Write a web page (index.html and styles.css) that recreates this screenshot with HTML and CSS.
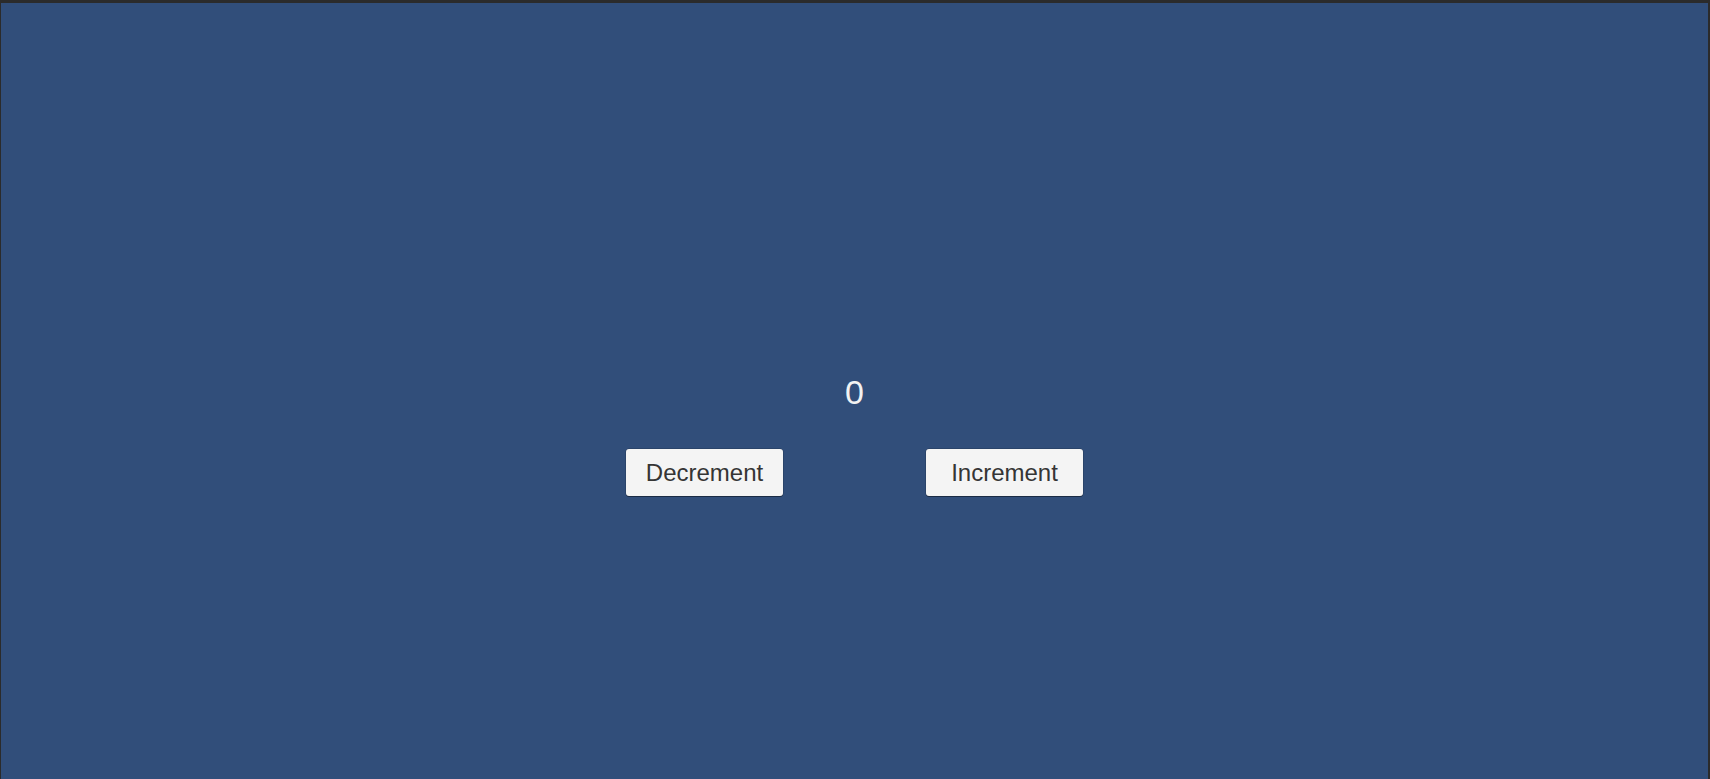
FILE: index.html
```html
<!DOCTYPE html>
<html>
<head>
<meta charset="utf-8">
<link rel="stylesheet" href="styles.css">
</head>
<body>
<div class="frame">
  <main class="counter">
    <div class="count">0</div>
    <div class="controls">
      <button class="btn">Decrement</button>
      <button class="btn">Increment</button>
    </div>
  </main>
</div>
</body>
</html>
```
FILE: styles.css
```css
html, body {
  margin: 0;
  padding: 0;
  height: 100%;
}
body {
  background: #2b2b2b;
  font-family: "Liberation Sans", Arial, sans-serif;
}
.frame {
  box-sizing: border-box;
  height: 779px;
  border-top: 3px solid #2b2b2b;
  border-left: 1px solid #2b2b2b;
  border-right: 2px solid #2b2b2b;
  background: #314e7a;
}
.counter {
  display: flex;
  flex-direction: column;
  align-items: center;
  padding-top: 370px;
}
.count {
  font-size: 34px;
  line-height: 39px;
  color: #f2f2f2;
}
.controls {
  display: flex;
  gap: 143px;
  margin-top: 37px;
}
.btn {
  box-sizing: border-box;
  width: 157px;
  height: 47px;
  padding: 0;
  border: none;
  border-radius: 3px;
  background: #f4f4f4;
  color: #353535;
  font-family: "Liberation Sans", Arial, sans-serif;
  font-size: 24px;
  box-shadow: 0 1px 0 rgba(0, 0, 0, 0.35), 0 0 0 0.5px rgba(0, 0, 0, 0.25);
}
```
